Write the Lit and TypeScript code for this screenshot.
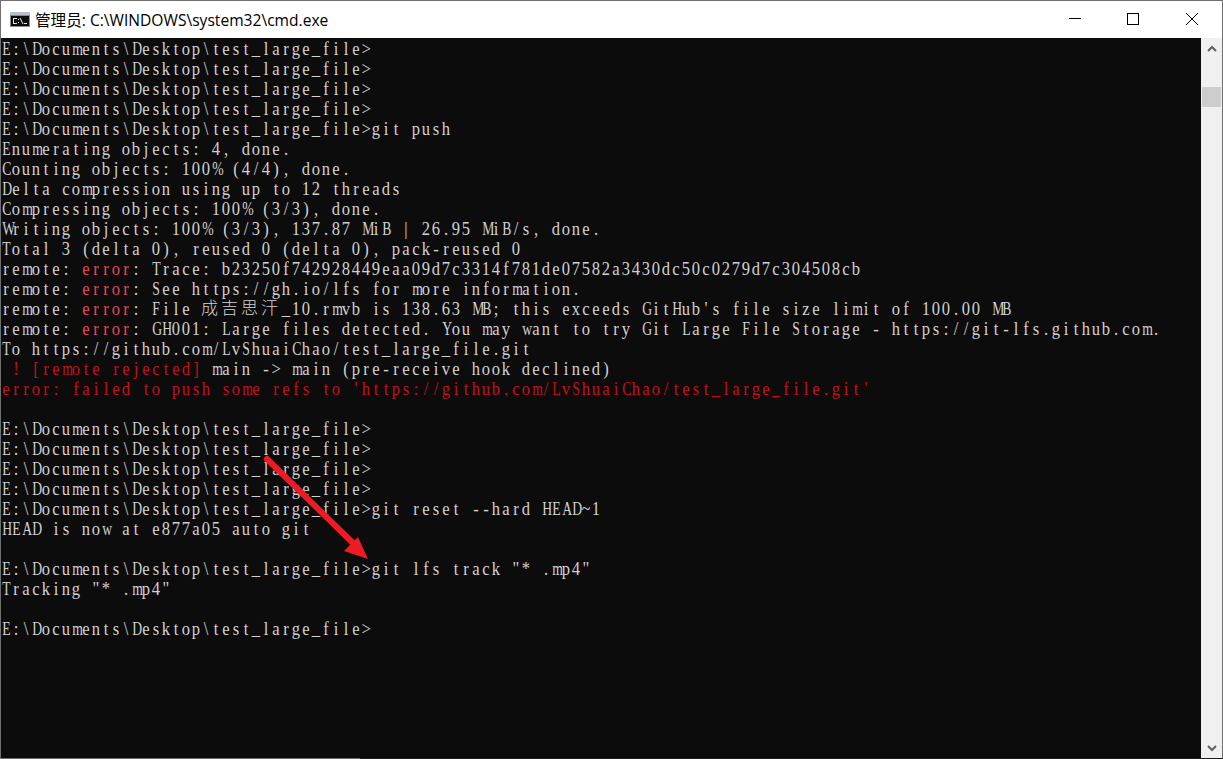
import { LitElement, html, css } from "lit";
import { customElement } from "lit/decorators.js";

type Seg = [string, string?];
const P = "E:\\Documents\\Desktop\\test_large_file>";
const LINES: (string | Seg[])[] = [
  P, P, P, P,
  P + "git push",
  "Enumerating objects: 4, done.",
  "Counting objects: 100% (4/4), done.",
  "Delta compression using up to 12 threads",
  "Compressing objects: 100% (3/3), done.",
  "Writing objects: 100% (3/3), 137.87 MiB | 26.95 MiB/s, done.",
  "Total 3 (delta 0), reused 0 (delta 0), pack-reused 0",
  [["remote: "], ["error", "lr"], [": Trace: b23250f742928449eaa09d7c3314f781de07582a3430dc50c0279d7c304508cb"]],
  [["remote: "], ["error", "lr"], [": See https://gh.io/lfs for more information."]],
  [["remote: "], ["error", "lr"], [": File "], ["成吉思汗", "cjk"], ["_10.rmvb is 138.63 MB; this exceeds GitHub's file size limit of 100.00 MB"]],
  [["remote: "], ["error", "lr"], [": GH001: Large files detected. You may want to try Git Large File Storage - https://git-lfs.github.com."]],
  "To https://github.com/LvShuaiChao/test_large_file.git",
  [[" "], ["! [remote rejected]", "dr"], [" main -> main (pre-receive hook declined)"]],
  [["error: failed to push some refs to 'https://github.com/LvShuaiChao/test_large_file.git'", "dr"]],
  "",
  P, P, P, P,
  P + "git reset --hard HEAD~1",
  "HEAD is now at e877a05 auto git",
  "",
  P + 'git lfs track "* .mp4"',
  'Tracking "* .mp4"',
  "",
  P,
];

const NARROW = /[A-Zmw%@]/;

/* The console font is a fixed-cell serif: each character sits in its own 10px cell. */
function cells(t: string) {
  return [...t].map((ch) =>
    html`<span class="c ${NARROW.test(ch) ? "n" : ""}">${ch}</span>`
  );
}

@customElement("app-root")
export class AppRoot extends LitElement {
  static styles = css`
    :host { display: block; width: 1223px; height: 759px; position: relative; overflow: hidden; background: #fff; }
    .win { height: 759px; box-sizing: border-box; border: 1px solid #6f6f6f; border-bottom: none; display: flex; flex-direction: column; background: #fff; }
    .bar { height: 37px; box-sizing: border-box; padding: 0 1px 1px 9px; flex: none; display: flex; align-items: center; background: #fff; }
    .ico { width: 20px; height: 15px; flex: none; display: block; margin-right: 5px; }
    .title { flex: 1; font: 15.6px "Open Sans", "Noto Sans CJK SC", sans-serif; color: #000; white-space: pre; }
    .btn { width: 58px; height: 36px; display: flex; align-items: center; justify-content: center; }
    .gap { margin-right: 1px; }
    .btn svg { width: 14px; height: 14px; display: block; overflow: visible; }
    .main { flex: 1; min-height: 0; display: flex; }
    .term { flex: 1; box-sizing: border-box; padding-top: 1px; background: #0c0c0c; color: #d2d2d2; font: 18px/20px "Liberation Serif", "Noto Sans CJK SC", serif; white-space: pre; overflow: hidden; }
    .ln { height: 20px; }
    .c { display: inline-block; width: 10px; text-align: center; height: 20px; vertical-align: top; transform: scaleX(0.92); }
    .n { transform: scaleX(0.76); }
    .lr { color: #e74856; }
    .dr { color: #c50f1f; }
    .cjk { display: inline-block; width: 80px; height: 20px; vertical-align: top; font-size: 17px; letter-spacing: 3px; line-height: 20px; font-weight: 300; }
    .sb { width: 20px; flex: none; background: #f0f0f0; border-left: 1px solid #f0f0f0; display: flex; flex-direction: column; align-items: center; justify-content: space-between; position: relative; }
    .sb svg { width: 10px; height: 7px; display: block; }
    .arr { height: 20px; display: flex; align-items: center; justify-content: center; }
    .thumb { position: absolute; left: 0; right: 1px; top: 49px; height: 20px; background: #cdcdcd; }
    .edge { height: 1px; flex: none; margin: 0 -1px; background: linear-gradient(to right, #6f6f6f 360px, #1c1c1c 360px); }
    .arrow { position: absolute; left: 0; top: 0; pointer-events: none; }
  `;

  private renderLine(l: string | Seg[]) {
    if (typeof l === "string") return html`<div class="ln">${cells(l)}</div>`;
    return html`<div class="ln">${l.map(([t, c]) =>
      c === "cjk" ? html`<span class="cjk">${t}</span>`
        : c ? html`<span class=${c}>${cells(t)}</span>` : cells(t))}</div>`;
  }

  render() {
    return html`
      <div class="win">
        <div class="bar">
          <svg class="ico" viewBox="0 0 20 15">
            <rect width="20" height="15" fill="#8a8a8a"/>
            <rect x="0" y="0" width="20" height="3" fill="#b9c2cc"/>
            <rect x="1" y="4" width="18" height="10" fill="#0c0c0c"/>
            <rect x="3" y="6" width="4" height="6" fill="#e8e8e8"/>
            <rect x="4" y="7" width="3" height="4" fill="#0c0c0c"/>
            <rect x="8" y="7" width="1" height="1" fill="#e8e8e8"/>
            <rect x="8" y="10" width="1" height="1" fill="#e8e8e8"/>
            <path d="M10 6l3 6" stroke="#e8e8e8" stroke-width="1" fill="none"/>
            <rect x="14" y="11" width="3" height="1" fill="#e8e8e8"/>
          </svg>
          <span class="title">管理员: C:\\WINDOWS\\system32\\cmd.exe</span>
          <div class="btn"><svg viewBox="0 0 14 14"><path d="M1 6.5h12" stroke="#000" stroke-width="1"/></svg></div>
          <div class="btn gap"><svg viewBox="0 0 14 14"><rect x="1.5" y="1.5" width="11" height="11" fill="none" stroke="#000" stroke-width="1"/></svg></div>
          <div class="btn"><svg viewBox="0 0 14 14"><path d="M1 1l12 12M13 1L1 13" stroke="#000" stroke-width="1"/></svg></div>
        </div>
        <div class="main">
          <div class="term">${LINES.map((l) => this.renderLine(l))}</div>
          <div class="sb">
            <div class="arr"><svg viewBox="0 0 10 7"><path d="M1 6l4-4 4 4" fill="none" stroke="#606060" stroke-width="2"/></svg></div>
            <div class="thumb"></div>
            <div class="arr"><svg viewBox="0 0 10 7"><path d="M1 1l4 4 4-4" fill="none" stroke="#606060" stroke-width="2"/></svg></div>
          </div>
        </div>
        <div class="edge"></div>
      </div>
      <svg class="arrow" width="1223" height="759" viewBox="0 0 1223 759">
        <path d="M267 459L354 544" stroke="#ed1c24" stroke-width="6" stroke-linecap="round" fill="none"/>
        <path d="M368 559L344 551L358 537Z" fill="#ed1c24"/>
      </svg>
    `;
  }
}
